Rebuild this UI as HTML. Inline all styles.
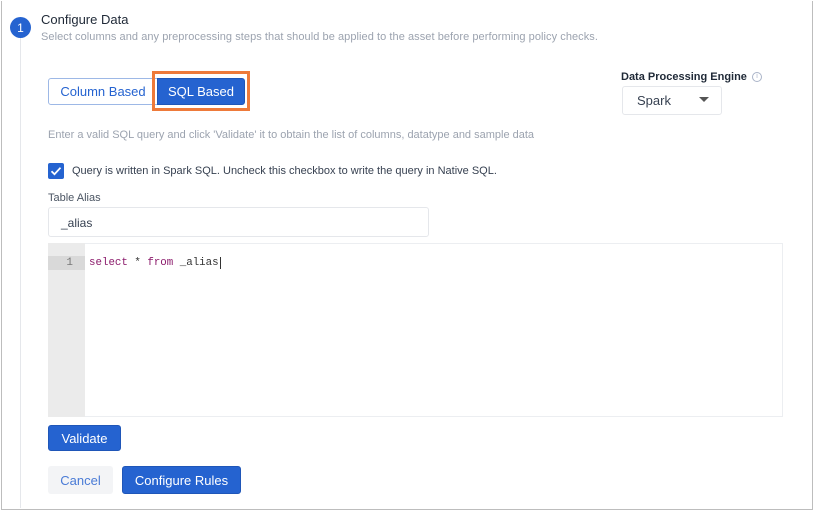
<!DOCTYPE html>
<html><head><style>
*{box-sizing:border-box;margin:0;padding:0}
body{width:815px;height:512px;background:#fff;font-family:"Liberation Sans",sans-serif;position:relative;overflow:hidden;color:#1f2937}
.a{position:absolute}
.frame{left:1px;top:1px;width:812px;height:509px;border:1px solid #bdbdbd;border-top:none}
.btn{display:flex;align-items:center;justify-content:center;font-size:13px;border-radius:3px}
.blue{background:#2563d0;color:#fff;border:1px solid #1f56b8}
</style></head><body>
<div class="a frame"></div>
<div class="a" style="left:20px;top:38px;width:1px;height:470px;background:#e5e7eb"></div>
<div class="a" style="left:10px;top:17px;width:21px;height:21px;border-radius:50%;background:#2563d0;color:#fff;font-size:12px;display:flex;align-items:center;justify-content:center">1</div>
<div class="a" style="left:41px;top:12px;font-size:13px;color:#1f2937">Configure Data</div>
<div class="a" style="left:41px;top:31px;font-size:11px;color:#9ca3af;letter-spacing:0.06px">Select columns and any preprocessing steps that should be applied to the asset before performing policy checks.</div>
<div class="a btn" style="left:48px;top:78px;width:110px;height:27px;border:1px solid #9db8e6;color:#2563d0;border-radius:3px 0 0 3px">Column Based</div>
<div class="a" style="left:152px;top:71px;width:98px;height:40px;border:3px solid #ee7a3a"></div>
<div class="a btn blue" style="left:157px;top:78px;width:88px;height:27px;border-radius:0 3px 3px 0">SQL Based</div>
<div class="a" style="left:621px;top:71px;font-size:11px;font-weight:bold;color:#1f2937">Data Processing Engine</div>
<div class="a" style="left:752px;top:72px;width:10px;height:10px;border:1px solid #aab4c8;border-radius:50%;font-size:7px;color:#aab4c8;text-align:center;line-height:8px">i</div>
<div class="a" style="left:622px;top:86px;width:100px;height:29px;border:1px solid #e5e7eb;border-radius:3px;font-size:13px;color:#374151;padding:6px 0 0 14px">Spark</div>
<div class="a" style="left:699px;top:97px;width:0;height:0;border-left:5px solid transparent;border-right:5px solid transparent;border-top:5px solid #555"></div>
<div class="a" style="left:48px;top:129px;font-size:11px;color:#9ca3af">Enter a valid SQL query and click 'Validate' it to obtain the list of columns, datatype and sample data</div>
<div class="a" style="left:48px;top:163px;width:16px;height:16px;background:#2563d0;border-radius:2px"><svg width="16" height="16"><path d="M3.5 8.2l3 3 6-6.5" stroke="#fff" stroke-width="1.8" fill="none"/></svg></div>
<div class="a" style="left:72px;top:165px;font-size:11px;color:#374151">Query is written in Spark SQL. Uncheck this checkbox to write the query in Native SQL.</div>
<div class="a" style="left:48px;top:192px;font-size:11px;color:#4b5563">Table Alias</div>
<div class="a" style="left:48px;top:207px;width:381px;height:30px;border:1px solid #e5e7eb;border-radius:3px;font-size:12px;color:#374151;padding:8px 0 0 12px">_alias</div>
<div class="a" style="left:48px;top:243px;width:735px;height:174px;border:1px solid #eceef1"></div>
<div class="a" style="left:48px;top:243px;width:37px;height:174px;background:#ebebeb"></div>
<div class="a" style="left:48px;top:256px;width:37px;height:14px;background:#d9d9d9;font-family:'Liberation Mono',monospace;font-size:11px;color:#777;text-align:right;padding-right:12px;line-height:14px">1</div>
<div class="a" style="left:89px;top:256px;font-family:'Liberation Mono',monospace;font-size:10.8px;line-height:14px;color:#333"><span style="color:#8b1a6b">select</span> * <span style="color:#8b1a6b">from</span> _alias<span style="border-left:1px solid #333;margin-left:1px"></span></div>
<div class="a btn blue" style="left:48px;top:425px;width:73px;height:26px">Validate</div>
<div class="a btn" style="left:48px;top:466px;width:65px;height:28px;background:#f3f4f6;color:#4a7bd6">Cancel</div>
<div class="a btn blue" style="left:122px;top:466px;width:119px;height:28px">Configure Rules</div>
</body></html>
